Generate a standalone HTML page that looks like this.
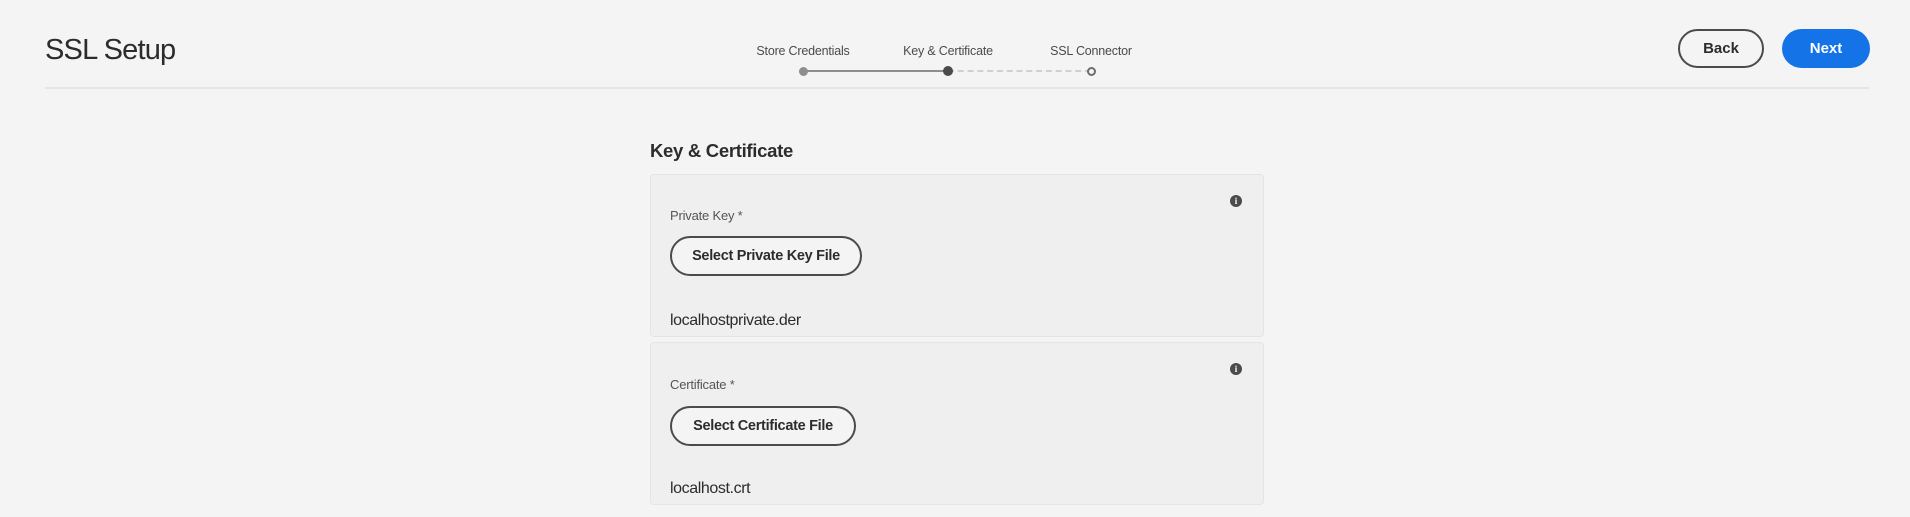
<!DOCTYPE html>
<html><head><style>
*{margin:0;padding:0;box-sizing:border-box}
body{width:1910px;height:517px;background:#f4f4f4;font-family:"Liberation Sans",sans-serif;color:#2c2c2c;position:relative;overflow:hidden}
.a{position:absolute}
.title{left:45px;top:34px;font-size:29px;font-weight:300;color:#2c2c2c;letter-spacing:-0.8px}
.hr{left:45px;top:87px;width:1824px;height:2px;background:#e4e4e4}
.step{top:44px;font-size:12.5px;color:#4b4b4b;transform:translateX(-50%);white-space:nowrap;letter-spacing:-0.2px}
.btn{border-radius:20px;font-weight:bold;font-size:15px;display:flex;align-items:center;justify-content:center}
.card{left:650px;width:614px;background:#efefef;border:1px solid #e4e4e4;border-radius:4px}
.lbl{font-size:13px;color:#555;letter-spacing:-0.2px}
.fb{border:2px solid #4b4b4b;border-radius:20px;font-weight:bold;font-size:14.5px;color:#2c2c2c;display:flex;align-items:center;justify-content:center;background:#f4f4f4;letter-spacing:-0.3px}
.fn{font-size:16px;color:#2c2c2c;letter-spacing:-0.4px}
.info{width:12px;height:12px;border-radius:50%;background:#4b4b4b;color:#fff;font-size:9px;font-weight:bold;text-align:center;line-height:12px;font-family:"Liberation Serif",serif}
</style></head><body>
<div class="a title">SSL Setup</div>
<div class="a hr"></div>
<div class="a step" style="left:803px">Store Credentials</div>
<div class="a step" style="left:948px">Key &amp; Certificate</div>
<div class="a step" style="left:1091px">SSL Connector</div>
<div class="a" style="left:803px;top:70px;width:145px;height:2px;background:#8e8e8e"></div>
<div class="a" style="left:948px;top:70px;width:143px;border-top:2px dashed #d0d0d0"></div>
<div class="a" style="left:799px;top:67px;width:9px;height:9px;border-radius:50%;background:#8e8e8e"></div>
<div class="a" style="left:943px;top:66px;width:10px;height:10px;border-radius:50%;background:#4b4b4b"></div>
<div class="a" style="left:1087px;top:67px;width:9px;height:9px;border-radius:50%;border:2px solid #6e6e6e;background:#f4f4f4"></div>
<div class="a btn" style="left:1678px;top:29px;width:86px;height:39px;border:2px solid #4b4b4b;color:#2c2c2c">Back</div>
<div class="a btn" style="left:1782px;top:29px;width:88px;height:39px;background:#1473e6;color:#fff">Next</div>
<div class="a" style="left:650px;top:140px;font-size:18.5px;font-weight:bold;color:#2c2c2c;letter-spacing:-0.3px">Key &amp; Certificate</div>
<div class="a card" style="top:174px;height:163px"></div>
<div class="a info" style="left:1230px;top:195px">i</div>
<div class="a lbl" style="left:670px;top:208px">Private Key *</div>
<div class="a fb" style="left:670px;top:236px;width:192px;height:40px">Select Private Key File</div>
<div class="a fn" style="left:670px;top:312px">localhostprivate.der</div>
<div class="a card" style="top:342px;height:163px"></div>
<div class="a info" style="left:1230px;top:363px">i</div>
<div class="a lbl" style="left:670px;top:377px">Certificate *</div>
<div class="a fb" style="left:670px;top:406px;width:186px;height:40px">Select Certificate File</div>
<div class="a fn" style="left:670px;top:480px">localhost.crt</div>
</body></html>
